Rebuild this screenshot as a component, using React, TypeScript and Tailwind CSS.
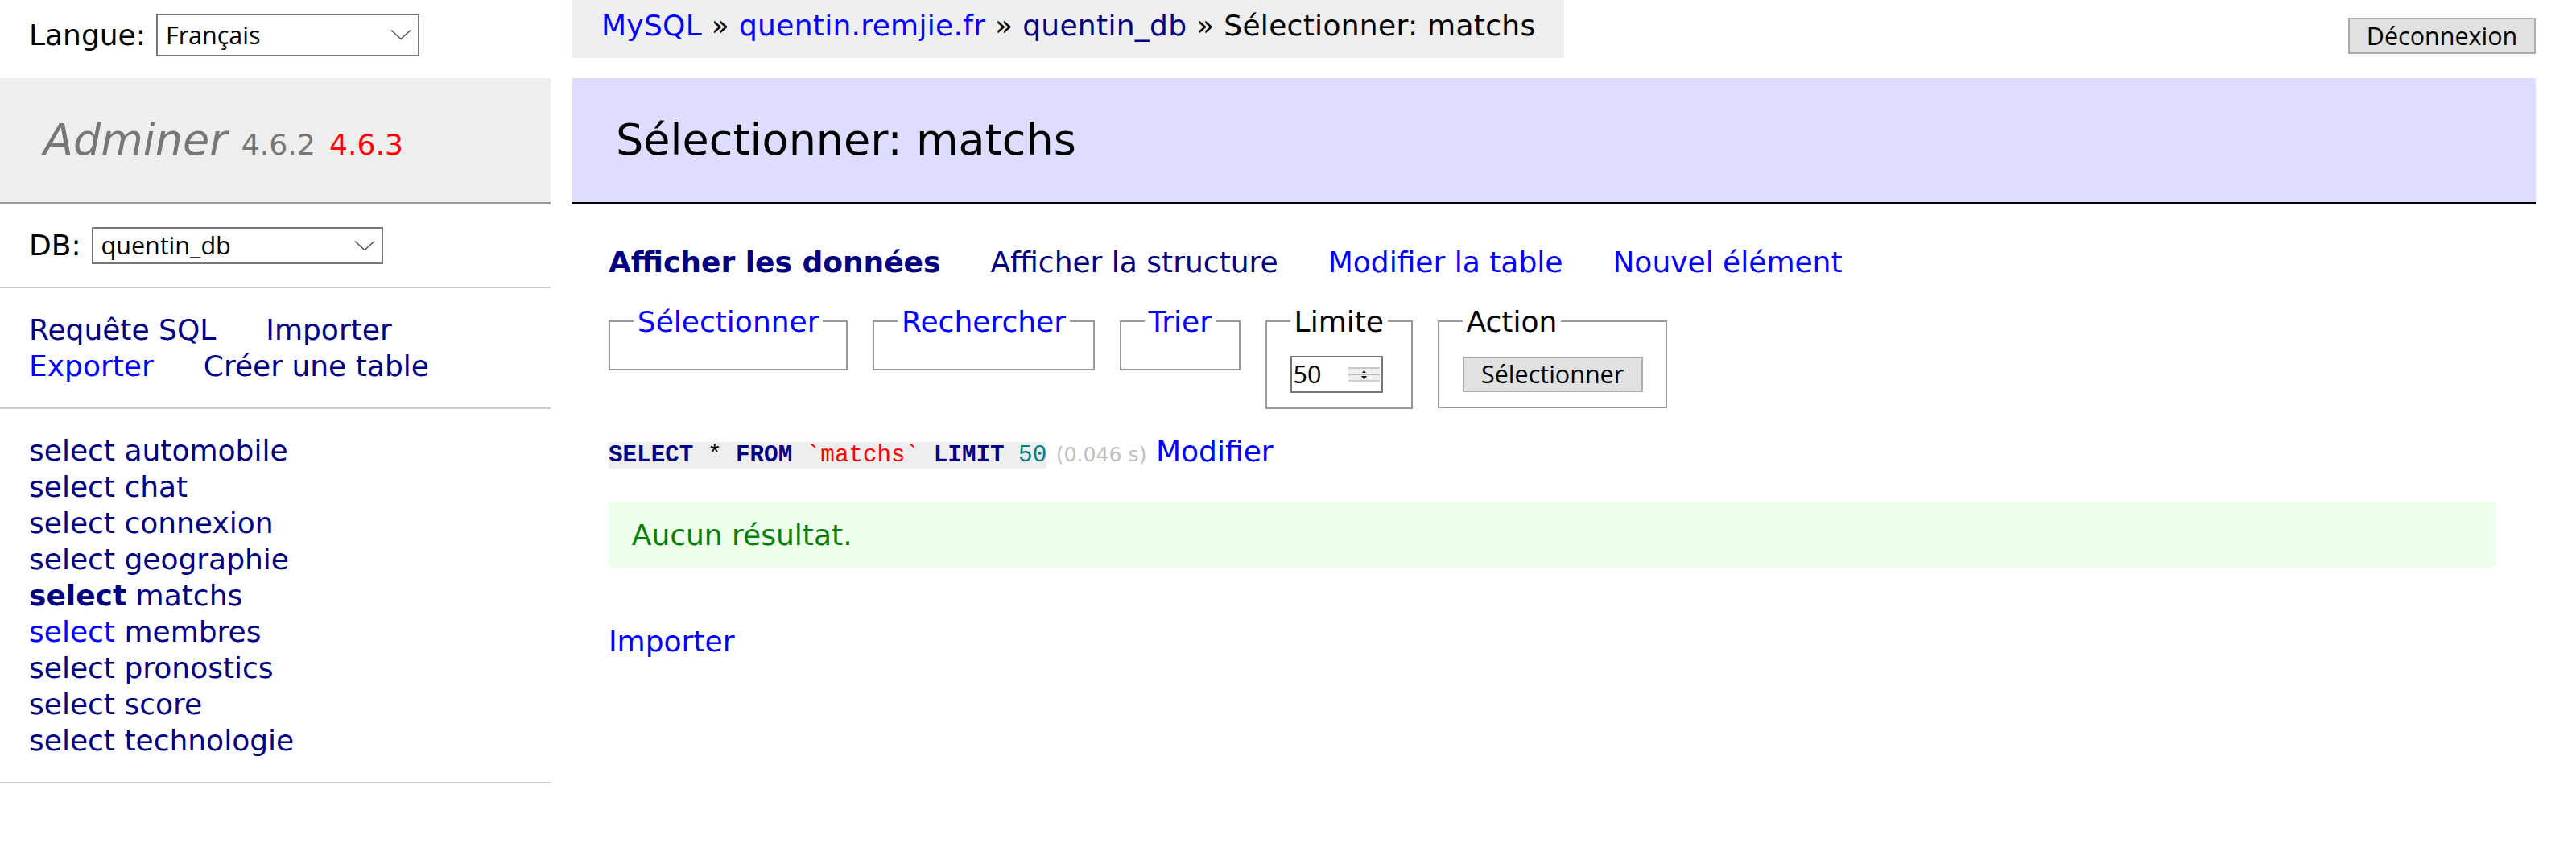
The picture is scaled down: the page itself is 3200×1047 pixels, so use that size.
import React from "react";

const navy = "text-[#000080]";
const blue = "text-[#0000ff]";

function Chevron() {
  return (
    <svg width="26" height="14" viewBox="0 0 26 14" className="shrink-0">
      <path d="M1 1.5 L13 12.5 L25 1.5" fill="none" stroke="#555" strokeWidth="1.6" />
    </svg>
  );
}

function FakeSelect({ value, width, height }: { value: string; width: string; height: string }) {
  return (
    <div
      className={`${width} ${height} flex items-center justify-between border-2 border-[#767676] bg-white pl-[10px] pr-[8px] font-['Open_Sans',sans-serif] text-[30.5px] leading-none text-black`}
    >
      <span>{value}</span>
      <Chevron />
    </div>
  );
}

function Spinner() {
  return (
    <svg width="39" height="18" viewBox="0 0 39 18">
      <rect x="0" y="0" width="39" height="18" fill="#efefef" />
      <line x1="0" y1="1" x2="39" y2="1" stroke="#c8c8c8" strokeWidth="2" />
      <line x1="0" y1="9" x2="39" y2="9" stroke="#b8b8b8" strokeWidth="2" />
      <line x1="0" y1="17" x2="39" y2="17" stroke="#d0d0d0" strokeWidth="2" />
      <path d="M17 7 L19.5 4 L22 7 Z" fill="#111" />
      <path d="M16 11 L23 11 L19.5 15.5 Z" fill="#111" />
    </svg>
  );
}

const tables = ["automobile", "chat", "connexion", "geographie", "matchs", "membres", "pronostics", "score", "technologie"];

export default function App() {
  return (
    <div className="flex w-full min-h-screen bg-white text-black font-['DejaVu_Sans',Verdana,sans-serif] text-[36px] leading-[45px]">
      {/* menu */}
      <div className="w-[711px] shrink-0 flex flex-col">
        <div className="h-[97px] pl-[36px] pt-[10.8px]">
          <div className="h-[64.8px] flex items-center gap-[13px]">
            <span>Langue:</span>
            <FakeSelect value="Français" width="w-[327px]" height="h-[53px]" />
          </div>
        </div>
        <div className="w-[684px] flex flex-col">
          <h1 className="bg-[#eee] border-b-2 border-[#999] px-[54px] py-[43.2px] text-[54px] leading-[67.5px] whitespace-nowrap">
            <span className="italic text-[#777]">Adminer</span>{" "}
            <span className="text-[36.2px] leading-none text-[#777]">4.6.2</span>{" "}
            <span className="text-[36.2px] leading-none text-[#ff0000]">4.6.3</span>
          </h1>
          <div className="px-[36px] py-[28.8px] border-b-2 border-[#ccc] flex items-center gap-[13px]">
            <span>DB:</span>
            <FakeSelect value="quentin_db" width="w-[362px]" height="h-[46px]" />
          </div>
          <div className="px-[36px] py-[28.8px] border-b-2 border-[#ccc] flex flex-wrap gap-x-[62px]">
            <a className={navy}>Requête SQL</a>
            <a className={navy}>Importer</a>
            <a className={blue}>Exporter</a>
            <a className={navy}>Créer une table</a>
          </div>
          <ul className="px-[36px] py-[28.8px] border-b-2 border-[#ccc]">
            {tables.map((t) => (
              <li key={t} className="whitespace-nowrap">
                <a className={`${t === "membres" ? blue : navy} ${t === "matchs" ? "font-bold" : ""}`}>select</a>{" "}
                <a className={navy}>{t}</a>
              </li>
            ))}
          </ul>
        </div>
      </div>

      {/* content */}
      <div className="flex-1 flex flex-col pr-[50px]">
        <div className="h-[72px] flex items-start justify-between">
          <div className="h-[72px] bg-[#eee] px-[36px] leading-[64.8px] whitespace-nowrap tracking-[0.3px]">
            <a className={blue}>MySQL</a> » <a className={blue}>quentin.remjie.fr</a> » <a className={navy}>quentin_db</a> » Sélectionner: matchs
          </div>
          <button className="mt-[22px] h-[45px] w-[233px] bg-[#e1e1e1] border-2 border-[#adadad] font-['Open_Sans',sans-serif] text-[30.5px] leading-none text-black">
            Déconnexion
          </button>
        </div>

        <h2 className="mt-[25px] bg-[#ddf] border-b-2 border-black px-[54px] py-[43.2px] text-[54px] leading-[67.5px]">
          Sélectionner: matchs
        </h2>

        <div className="pl-[45px] flex flex-col">
          <div className="mt-[50px] flex gap-x-[62px] whitespace-nowrap">
            <a className={`${navy} font-bold`}>Afficher les données</a>
            <a className={navy}>Afficher la structure</a>
            <a className={blue}>Modifier la table</a>
            <a className={blue}>Nouvel élément</a>
          </div>

          <div className="mt-[28.8px] flex items-start gap-[31px]">
            {["Sélectionner", "Rechercher", "Trier"].map((l) => (
              <fieldset key={l} className="border-2 border-[#999] px-[28.8px] pt-[18px] pb-[18px]">
                <legend className="px-[5px]">
                  <a className={blue}>{l}</a>
                </legend>
              </fieldset>
            ))}
            <fieldset className="border-2 border-[#999] px-[28.8px] pt-[18px] pb-[18px]">
              <legend className="px-[5px]">Limite</legend>
              <div className="mt-[2px] h-[46px] w-[115px] border-2 border-[#767676] flex items-center justify-between pl-[2px] pr-[2px] font-['Open_Sans',sans-serif] text-[30.5px] leading-none">
                <span>50</span>
                <Spinner />
              </div>
            </fieldset>
            <fieldset className="border-2 border-[#999] px-[28.8px] pt-[18px] pb-[18px]">
              <legend className="px-[5px]">Action</legend>
              <button className="mt-[3px] h-[44px] w-[224px] bg-[#e1e1e1] border-2 border-[#adadad] font-['Open_Sans',sans-serif] text-[30.5px] leading-none text-black">
                Sélectionner
              </button>
            </fieldset>
          </div>

          <p className="mt-[30px] whitespace-nowrap">
            <code className="bg-[#eee] font-['Liberation_Mono',monospace] text-[29.25px]">
              <b className={navy}>SELECT</b> * <b className={navy}>FROM</b>{" "}
              <span className="text-[#ff0000]">`matchs`</span> <b className={navy}>LIMIT</b>{" "}
              <span className="text-[#007f7f]">50</span>
            </code>{" "}
            <span className="text-[25.2px] text-[#c0c0c0]">(0.046 s)</span> <a className={blue}>Modifier</a>
          </p>

          <p className="mt-[36px] mr-[50px] px-[28.8px] py-[18px] bg-[#efe] text-[#008000]">Aucun résultat.</p>

          <div className="mt-[69px]">
            <a className={blue}>Importer</a>
          </div>
        </div>
      </div>
    </div>
  );
}
